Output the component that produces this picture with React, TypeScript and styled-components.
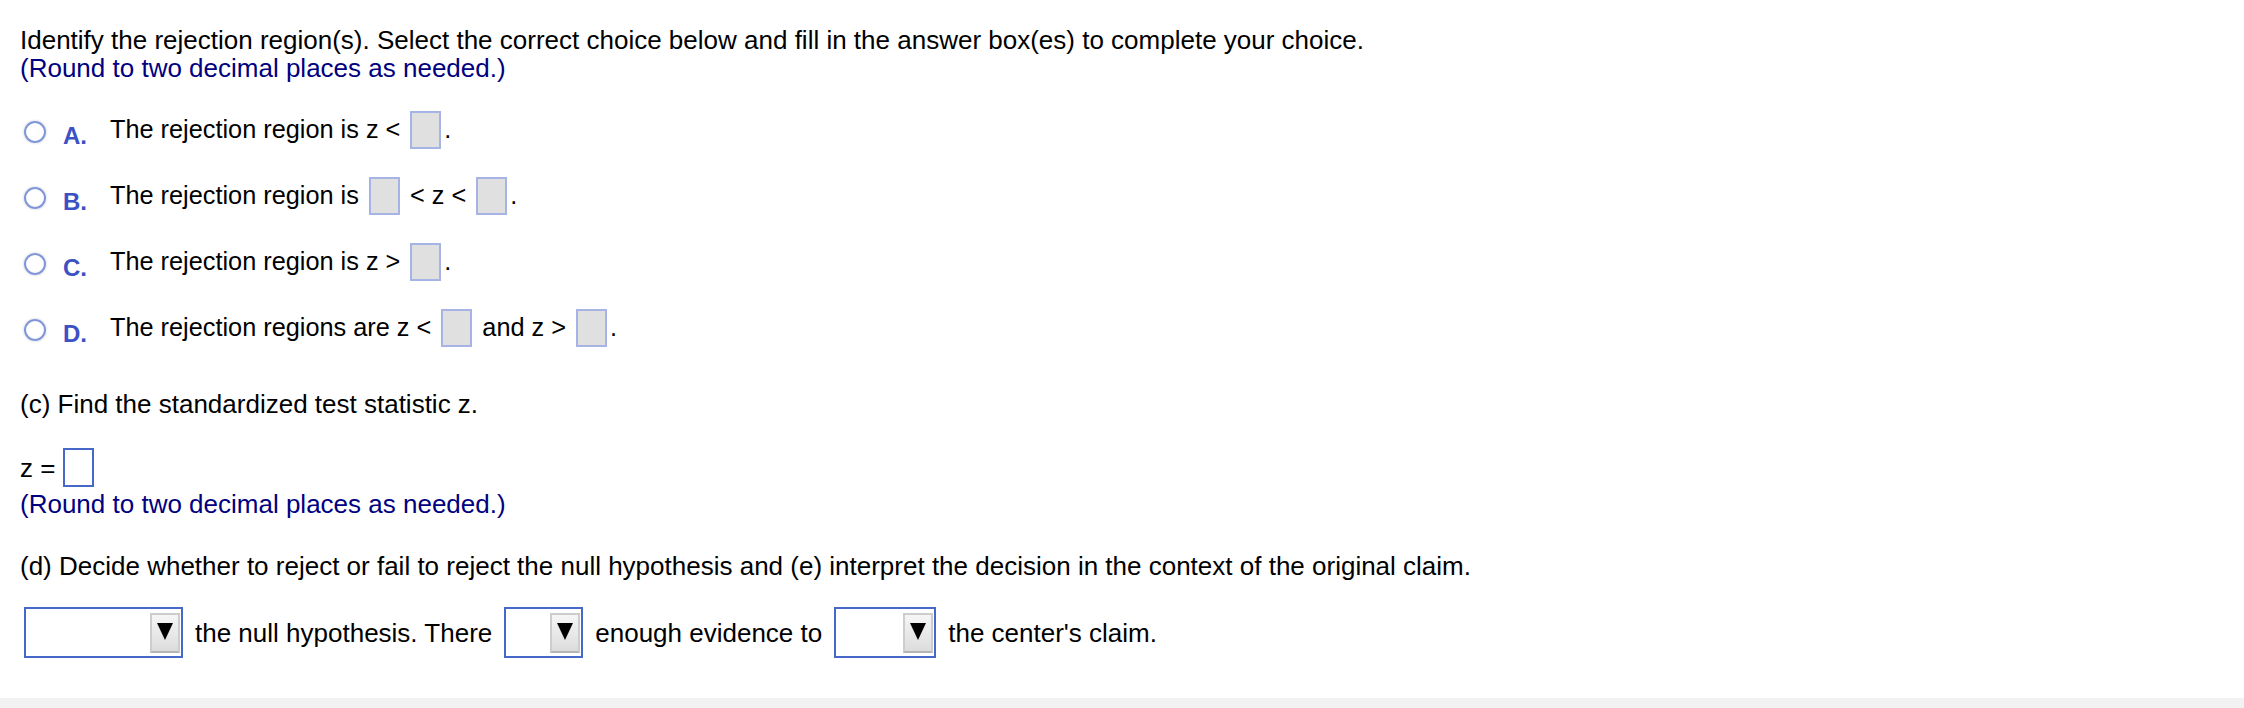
import React from 'react';
import styled, { createGlobalStyle } from 'styled-components';

const GlobalStyle = createGlobalStyle`
  html, body {
    margin: 0;
    padding: 0;
    background: #ffffff;
  }
  body {
    font-family: "Liberation Sans", Arial, sans-serif;
    font-size: 26px;
    color: #000000;
  }
`;

const Page = styled.div`
  display: flex;
  flex-direction: column;
  min-height: 708px;
`;

const Main = styled.div`
  flex: 1;
  padding: 26px 20px 40px;
`;

const Line = styled.div<{ $top?: number; $navy?: boolean }>`
  margin-top: ${p => p.$top ?? 0}px;
  line-height: 28px;
  color: ${p => (p.$navy ? '#000080' : '#000000')};
  white-space: nowrap;
`;

const Options = styled.div`
  display: flex;
  flex-direction: column;
  gap: 28px;
  margin-top: 29px;
`;

const OptionRow = styled.div`
  display: flex;
  align-items: center;
  height: 38px;
`;

const Marker = styled.div`
  display: flex;
  align-items: center;
  padding-top: 4px;
`;

const Radio = styled.span`
  display: block;
  box-sizing: border-box;
  width: 22px;
  height: 22px;
  margin-left: 4px;
  border-radius: 50%;
  border: 2px solid #8195d9;
  background: radial-gradient(circle at 50% 40%, #ffffff 55%, #eff1f9 100%);
  box-shadow: 0 0 2px 1px rgba(150, 150, 150, 0.22);
`;

const Letter = styled.span`
  display: block;
  width: 47px;
  margin-left: 17px;
  padding-top: 8px;
  font-size: 24px;
  font-weight: bold;
  color: #3b51c4;
`;

const Content = styled.div`
  font-size: 25.3px;
  line-height: 28px;
  white-space: nowrap;
`;

const AnswerBox = styled.span`
  display: inline-block;
  box-sizing: border-box;
  width: 31px;
  height: 38px;
  margin: 0 3px 0 10px;
  vertical-align: -11px;
  border: 2px solid #a5b4e4;
  background: #e0e0e0;
`;

const ZRow = styled.div`
  display: flex;
  align-items: center;
  height: 39px;
  margin-top: 30px;
  line-height: 28px;
`;

const ZInput = styled.span`
  display: block;
  box-sizing: border-box;
  width: 31px;
  height: 39px;
  margin-left: 8px;
  border: 2px solid #4668c9;
  background: #ffffff;
`;

const SelectRow = styled.div`
  display: flex;
  align-items: center;
  gap: 12px;
  margin-top: 27px;
  padding-left: 4px;
  line-height: 28px;
  white-space: nowrap;
`;

const Dropdown = styled.div<{ $w: number }>`
  box-sizing: border-box;
  width: ${p => p.$w}px;
  height: 51px;
  border: 2px solid #4668c9;
  background: #ffffff;
  display: flex;
  justify-content: flex-end;
  align-items: flex-start;
  padding: 4px 1px 0 0;
`;

const ArrowButton = styled.div`
  box-sizing: border-box;
  width: 30px;
  height: 40px;
  border: 2px solid #cdcdcd;
  border-bottom-color: #b4b4b4;
  background: linear-gradient(#f6f6f6, #dcdcdc);
  display: flex;
  justify-content: center;
  padding-top: 8px;
`;

const Footer = styled.div`
  height: 10px;
  background: #f2f2f2;
`;

function Arrow() {
  return (
    <svg width="16" height="17" viewBox="0 0 16 17">
      <polygon points="0,0 16,0 8,17" fill="#000" />
    </svg>
  );
}

function Select({ width }: { width: number }) {
  return (
    <Dropdown $w={width}>
      <ArrowButton>
        <Arrow />
      </ArrowButton>
    </Dropdown>
  );
}

function Option({ letter, children }: { letter: string; children: React.ReactNode }) {
  return (
    <OptionRow>
      <Marker>
        <Radio />
        <Letter>{letter}.</Letter>
      </Marker>
      <Content>{children}</Content>
    </OptionRow>
  );
}

export default function App() {
  return (
    <Page>
      <GlobalStyle />
      <Main>
        <Line>
          Identify the rejection region(s). Select the correct choice below and fill in the answer box(es) to complete your choice.
        </Line>
        <Line $navy>(Round to two decimal places as needed.)</Line>

        <Options>
          <Option letter="A">
            The rejection region is z &lt;<AnswerBox />.
          </Option>
          <Option letter="B">
            The rejection region is<AnswerBox /> &lt; z &lt;<AnswerBox />.
          </Option>
          <Option letter="C">
            The rejection region is z &gt;<AnswerBox />.
          </Option>
          <Option letter="D">
            The rejection regions are z &lt;<AnswerBox /> and z &gt;<AnswerBox />.
          </Option>
        </Options>

        <Line $top={43}>(c) Find the standardized test statistic z.</Line>
        <ZRow>
          <span>z =</span>
          <ZInput />
        </ZRow>
        <Line $top={3} $navy>(Round to two decimal places as needed.)</Line>

        <Line $top={34}>
          (d) Decide whether to reject or fail to reject the null hypothesis and (e) interpret the decision in the context of the original claim.
        </Line>
        <SelectRow>
          <Select width={159} />
          <span>the null hypothesis. There</span>
          <Select width={79} />
          <span>enough evidence to</span>
          <Select width={102} />
          <span>the center's claim.</span>
        </SelectRow>
      </Main>
      <Footer />
    </Page>
  );
}
